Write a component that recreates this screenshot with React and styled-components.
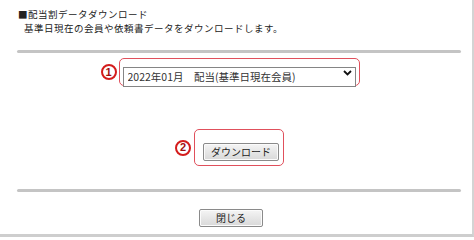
import React from 'react'
import styled, { createGlobalStyle } from 'styled-components'

const GlobalStyle = createGlobalStyle`
  * {
    box-sizing: border-box;
  }
  body {
    margin: 0;
    background: #fff;
    font-family: "Noto Sans CJK JP", "Liberation Sans", sans-serif;
  }
`

const Page = styled.div`
  width: 474px;
  height: 237px;
  padding: 7px 11px 0 17px;
  border-right: 2px solid #d4d4d4;
  border-bottom: 3px solid #cecece;
  overflow: hidden;
`

const Heading = styled.div`
  padding-left: 1px;
  font-size: 9.5px;
  letter-spacing: 0.5px;
  line-height: 14px;
  color: #222;
`

const Description = styled(Heading)`
  padding-left: 7px;
`

const Rule = styled.div`
  height: 3px;
  margin-top: ${p => p.$top}px;
  background: #c4c4c4;
  border-radius: 2px;
`

const Row = styled.div`
  display: flex;
  justify-content: center;
  margin-top: ${p => p.$top}px;
  padding-right: ${p => p.$shift || 0}px;
`

const Callout = styled.div`
  position: relative;
  border: 1px solid #e0505c;
  border-radius: 5px;
  padding: ${p => p.$pad};
`

const Marker = styled.span`
  position: absolute;
  right: calc(100% + ${p => p.$gap}px);
  top: 50%;
  margin-top: -8px;
  width: 16px;
  height: 16px;
  border: 2px solid #d41c1c;
  border-radius: 50%;
  background: #fff;
  display: flex;
  align-items: center;
  justify-content: center;
  font-family: "Liberation Sans", Arial, sans-serif;
  font-weight: bold;
  font-size: 11px;
  line-height: 1;
  color: #a01010;
`

const SelectBox = styled.div`
  position: relative;
  width: 233px;
  height: 20px;
`

const Select = styled.select`
  appearance: none;
  width: 100%;
  height: 100%;
  margin: 0;
  padding: 0 0 0 4px;
  border: 1px solid #858585;
  border-radius: 0;
  background: #fff;
  font-family: "Noto Sans CJK JP", "Liberation Sans", sans-serif;
  font-size: 10.5px;
  color: #333;
  outline: none;
`

const Chevron = styled.svg`
  position: absolute;
  right: 4px;
  top: 8px;
  pointer-events: none;
`

const Button = styled.button`
  width: ${p => p.$w}px;
  height: ${p => p.$h}px;
  margin: 0;
  padding: 0;
  border: 1px solid #8a8a8a;
  border-radius: 2px;
  background: linear-gradient(#f5f5f5, #e6e6e6 50%, #d9d9d9);
  box-shadow: inset 0 0 0 1px #fbfbfb;
  font-family: "Noto Sans CJK JP", "Liberation Sans", sans-serif;
  font-size: 10px;
  line-height: 1;
  color: #222;
`

export default function App() {
  return (
    <>
      <GlobalStyle />
      <Page>
        <Heading>■配当割データダウンロード</Heading>
        <Description>基準日現在の会員や依頼書データをダウンロードします。</Description>
        <Rule $top={15} />
        <Row $top={5}>
          <Callout $pad="3px">
            <Marker $gap={3}>1</Marker>
            <SelectBox>
              <Select defaultValue="202201">
                <option value="202201">2022年01月　配当(基準日現在会員)</option>
              </Select>
              <Chevron width="9" height="6" viewBox="0 0 9 6">
                <path d="M1 1 L4.5 4.5 L8 1" fill="none" stroke="#111" strokeWidth="1.8" />
              </Chevron>
            </SelectBox>
          </Callout>
        </Row>
        <Row $top={43}>
          <Callout $pad="7px 4px 4px 8px">
            <Marker $gap={4}>2</Marker>
            <Button $w={76} $h={18}>ダウンロード</Button>
          </Callout>
        </Row>
        <Rule $top={23} />
        <Row $top={17} $shift={16}>
          <Button $w={64} $h={18}>閉じる</Button>
        </Row>
      </Page>
    </>
  )
}
